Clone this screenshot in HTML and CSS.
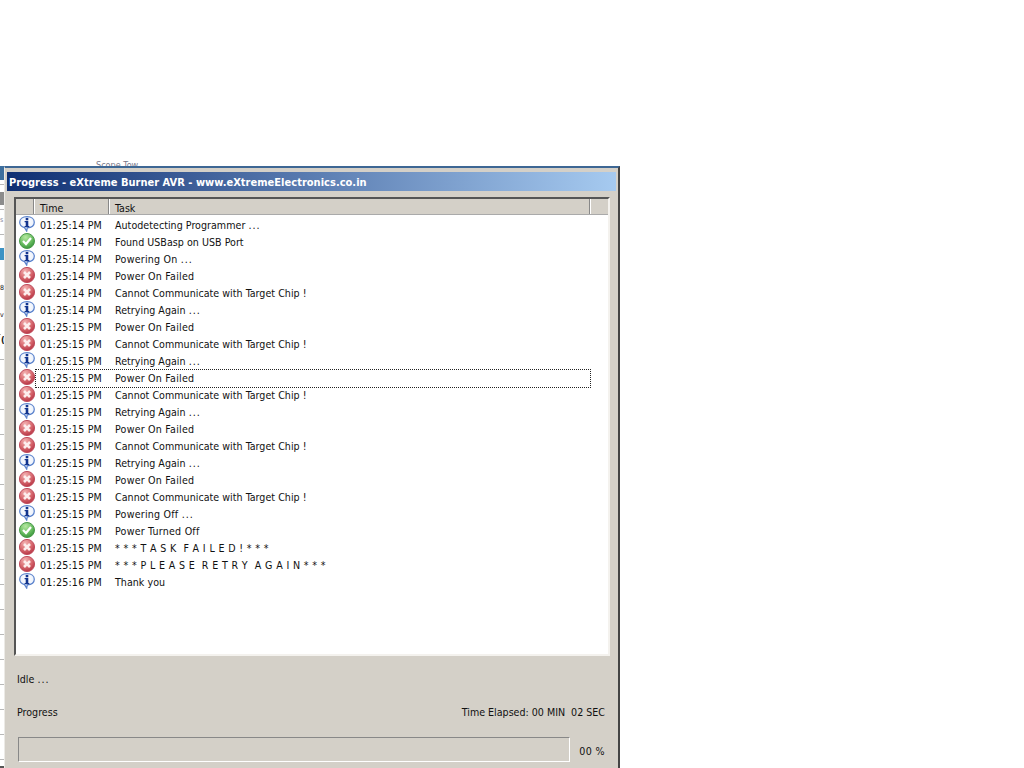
FILE: index.html
```html
<!DOCTYPE html>
<html lang="en">
<head>
<meta charset="utf-8">
<title>Progress - eXtreme Burner AVR</title>
<link rel="stylesheet" href="styles.css">
</head>
<body>
<svg class="defs" width="0" height="0" aria-hidden="true">
  <defs>
    <radialGradient id="gi" cx="50%" cy="35%" r="65%"><stop offset="0" stop-color="#ffffff"/><stop offset="0.65" stop-color="#eef3fc"/><stop offset="1" stop-color="#9db9e8"/></radialGradient>
    <radialGradient id="gk" cx="40%" cy="25%" r="80%"><stop offset="0" stop-color="#b4e8a0"/><stop offset="0.6" stop-color="#68bc60"/><stop offset="1" stop-color="#349038"/></radialGradient>
    <radialGradient id="gx" cx="38%" cy="25%" r="80%"><stop offset="0" stop-color="#f4b4b4"/><stop offset="0.55" stop-color="#d86a70"/><stop offset="1" stop-color="#b43040"/></radialGradient>
    <symbol id="info" viewBox="0 0 16 16">
      <path d="M8 .7C3.700.7.700 3 .700 6.300c0 2.800 2.100 4.700 4.800 5.300L7.700 15.200l.6-3.400c4.200-.1 7-2.300 7-5.500C15.300 3 12.300.7 8 .7z" fill="url(#gi)" stroke="#5a82cc" stroke-width="1.200"/>
      <rect x="6.700" y="1.900" width="2.600" height="2.400" fill="#12348e"/>
      <path d="M5.600 5.100h3.700v5h1v1.200H5.600v-1.200h1.100V6.300H5.600z" fill="#12348e"/>
    </symbol>
    <symbol id="ok" viewBox="0 0 16 16">
      <circle cx="8" cy="8" r="7.500" fill="url(#gk)" stroke="#4a9a4a"/>
      <path d="M4 8l3 3 5-6" fill="none" stroke="#fff" stroke-width="2.200"/>
    </symbol>
    <symbol id="err" viewBox="0 0 16 16">
      <circle cx="8" cy="8" r="7.600" fill="url(#gx)" stroke="#c05060"/>
      <path d="M5 5l6 6M11 5l-6 6" fill="none" stroke="#fdeeee" stroke-width="2.600"/>
    </symbol>
  </defs>
</svg>

<div class="backdrop">
  <div class="scrap-top">Scope Tow</div>
  <div class="blk blk-blue1"></div>
  <div class="blk blk-gray"></div>
  <div class="blk blk-blue2"></div>
  <div class="blk blk-foot"></div>
  <span class="frag frag1">s</span>
  <span class="frag frag2">8</span>
  <span class="frag frag3">v</span>
  <span class="frag frag4">(</span>
</div>

<main class="window">
  <header class="titlebar">Progress - eXtreme Burner AVR - www.eXtremeElectronics.co.in</header>
  <section class="list">
    <div class="head">
      <span class="hc hc-icon"></span>
      <span class="hc hc-time">Time</span>
      <span class="hc hc-task">Task</span>
      <span class="hc hc-end"></span>
    </div>
    <ul class="rows">
      <li class="row"><svg class="ico"><use href="#info"/></svg><span class="time">01:25:14 PM</span><span class="task">Autodetecting Programmer <span class="dots">...</span></span></li>
      <li class="row"><svg class="ico"><use href="#ok"/></svg><span class="time">01:25:14 PM</span><span class="task">Found USBasp on USB Port</span></li>
      <li class="row"><svg class="ico"><use href="#info"/></svg><span class="time">01:25:14 PM</span><span class="task wide">Powering On <span class="dots">...</span></span></li>
      <li class="row"><svg class="ico"><use href="#err"/></svg><span class="time">01:25:14 PM</span><span class="task wide">Power On Failed</span></li>
      <li class="row"><svg class="ico"><use href="#err"/></svg><span class="time">01:25:14 PM</span><span class="task">Cannot Communicate with Target Chip !</span></li>
      <li class="row"><svg class="ico"><use href="#info"/></svg><span class="time">01:25:14 PM</span><span class="task">Retrying Again <span class="dots">...</span></span></li>
      <li class="row"><svg class="ico"><use href="#err"/></svg><span class="time">01:25:15 PM</span><span class="task wide">Power On Failed</span></li>
      <li class="row"><svg class="ico"><use href="#err"/></svg><span class="time">01:25:15 PM</span><span class="task">Cannot Communicate with Target Chip !</span></li>
      <li class="row"><svg class="ico"><use href="#info"/></svg><span class="time">01:25:15 PM</span><span class="task">Retrying Again <span class="dots">...</span></span></li>
      <li class="row focus"><svg class="ico"><use href="#err"/></svg><span class="time">01:25:15 PM</span><span class="task wide">Power On Failed</span></li>
      <li class="row"><svg class="ico"><use href="#err"/></svg><span class="time">01:25:15 PM</span><span class="task">Cannot Communicate with Target Chip !</span></li>
      <li class="row"><svg class="ico"><use href="#info"/></svg><span class="time">01:25:15 PM</span><span class="task">Retrying Again <span class="dots">...</span></span></li>
      <li class="row"><svg class="ico"><use href="#err"/></svg><span class="time">01:25:15 PM</span><span class="task wide">Power On Failed</span></li>
      <li class="row"><svg class="ico"><use href="#err"/></svg><span class="time">01:25:15 PM</span><span class="task">Cannot Communicate with Target Chip !</span></li>
      <li class="row"><svg class="ico"><use href="#info"/></svg><span class="time">01:25:15 PM</span><span class="task">Retrying Again <span class="dots">...</span></span></li>
      <li class="row"><svg class="ico"><use href="#err"/></svg><span class="time">01:25:15 PM</span><span class="task wide">Power On Failed</span></li>
      <li class="row"><svg class="ico"><use href="#err"/></svg><span class="time">01:25:15 PM</span><span class="task">Cannot Communicate with Target Chip !</span></li>
      <li class="row"><svg class="ico"><use href="#info"/></svg><span class="time">01:25:15 PM</span><span class="task wide">Powering Off <span class="dots">...</span></span></li>
      <li class="row"><svg class="ico"><use href="#ok"/></svg><span class="time">01:25:15 PM</span><span class="task wide">Power Turned Off</span></li>
      <li class="row"><svg class="ico"><use href="#err"/></svg><span class="time">01:25:15 PM</span><span class="task spaced">* * * T A S K&nbsp; F A I L E D ! * * *</span></li>
      <li class="row"><svg class="ico"><use href="#err"/></svg><span class="time">01:25:15 PM</span><span class="task spaced">* * * P L E A S E&nbsp; R E T R Y&nbsp; A G A I N * * *</span></li>
      <li class="row"><svg class="ico"><use href="#info"/></svg><span class="time">01:25:16 PM</span><span class="task">Thank you</span></li>
    </ul>
  </section>
  <div class="status">Idle <span class="dots">...</span></div>
  <div class="meta"><span>Progress</span><span>Time Elapsed: 00 MIN&nbsp; 02 SEC</span></div>
  <div class="progress"><div class="track"></div><span class="pct">00 %</span></div>
</main>
</body>
</html>
```
FILE: styles.css
```css
* { box-sizing: border-box; }
html, body { margin: 0; height: 768px; overflow: hidden; background: #fff; }
body { position: relative; font: 10.6px "DejaVu Sans Condensed", "DejaVu Sans", sans-serif; font-stretch: condensed; color: #111; }
.defs { position: absolute; }
.backdrop { position: absolute; left: 0; top: 160px; width: 5px; height: 608px; background: repeating-linear-gradient(#fff 0 24px, #b8b8b8 24px 25px); }
.scrap-top { position: absolute; left: 96px; top: 1px; font-size: 9px; line-height: 9px; color: #778; white-space: nowrap; }
.blk { position: absolute; left: 0; width: 5px; }
.blk-blue1 { top: 6px; height: 14px; background: #3d6f9e; }
.blk-gray { top: 32px; height: 13px; background: #8c8c8c; }
.blk-blue2 { top: 88px; height: 12px; background: #3c93c4; }
.blk-foot { top: 606px; height: 2px; background: #555; }
.frag { position: absolute; left: 0; font-size: 7px; line-height: 12px; white-space: nowrap; background: #fff; }
.frag1 { top: 54px; color: #889; }
.frag2 { top: 122px; }
.frag3 { top: 149px; }
.frag4 { top: 174px; left: 1px; font-size: 9px; font-weight: bold; }
.window { position: absolute; left: 4px; top: 166px; width: 616px; height: 602px; background: #d4d0c8; border-top: 2px solid #3d6794; border-right: 2px solid #444; border-left: 1px solid #eceae6; padding: 4px 2px 0 2px; display: flex; flex-direction: column; }
.titlebar { height: 19px; flex: none; line-height: 21px; padding-left: 2px; color: #fff; font-weight: bold; font-size: 11px; letter-spacing: .02px; background: linear-gradient(90deg, #0f2f72, #a6caf0); white-space: nowrap; }
.list { margin: 6px 6px 0 7px; height: 459px; flex: none; background: #fff; border: 2px solid; border-color: #555 #f4f2ee #f4f2ee #555; display: flex; flex-direction: column; }
.head { display: flex; height: 16px; flex: none; background: #d4d0c8; border-bottom: 1px solid #aaa; line-height: 18px; }
.hc { display: block; border-right: 1px solid #888; box-shadow: 1px 0 0 #fff; padding-left: 6px; }
.hc-icon { width: 18px; }
.hc-time { width: 75px; }
.hc-task { width: 481px; }
.hc-end { flex: 1; border-right: 0; box-shadow: none; }
.rows { list-style: none; margin: 0; padding: 1px 0 0; }
.row { display: flex; align-items: center; height: 17px; white-space: nowrap; position: relative; }
.ico { width: 16px; height: 16px; margin-left: 3px; margin-top: -1px; flex: none; }
.time { width: 74px; padding-left: 5px; padding-top: 1px; letter-spacing: .2px; }
.task { padding-left: 6px; padding-top: 1px; flex: 1; letter-spacing: .03px; }
.wide { letter-spacing: .22px; }
.dots { letter-spacing: 1px; }
.spaced { white-space: pre; letter-spacing: .35px; }
.focus::after { content: ""; position: absolute; left: 19px; top: 0; width: 554px; height: 17px; border: 1px dotted #222; }
.status { margin: 16px 0 0 10px; line-height: 14px; flex: none; }
.meta { display: flex; justify-content: space-between; margin: 19px 11px 0 10px; line-height: 14px; flex: none; }
.progress { display: flex; align-items: flex-end; margin: 18px 11px 0 11px; flex: none; }
.track { width: 552px; height: 25px; border: 1px solid; border-color: #888 #fff #fff #888; }
.pct { margin-left: auto; line-height: 14px; padding-bottom: 4px; letter-spacing: .4px; }
```
